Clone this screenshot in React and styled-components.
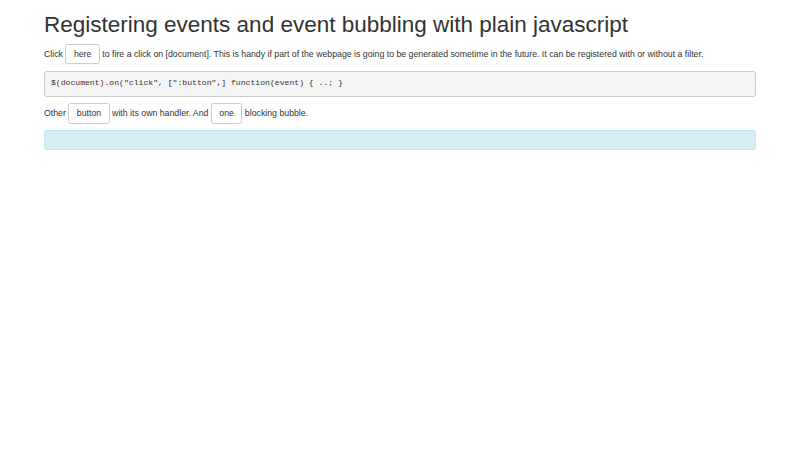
import React from "react";
import styled, { createGlobalStyle } from "styled-components";

const Global = createGlobalStyle`
  html, body { margin: 0; padding: 0; background: #fff; }
  body {
    font-family: "Liberation Sans", Arial, sans-serif;
    font-size: 8.75px;
    line-height: 12.5px;
    color: #333;
  }
  * { box-sizing: border-box; }
`;

const Container = styled.div`
  width: 712px;
  margin: 0 auto;
`;

const Title = styled.h1`
  font-family: "Liberation Sans", Arial, sans-serif;
  font-size: 22.5px;
  font-weight: 500;
  line-height: 1.1;
  color: #333;
  margin: 12.5px 0 6.25px;
`;

const Para = styled.p`
  margin: 0 0 6.25px;
`;

const Button = styled.button`
  display: inline-block;
  vertical-align: middle;
  height: 20.75px;
  font-family: "Liberation Sans", Arial, sans-serif;
  font-size: 8.75px;
  line-height: 12.5px;
  color: #333;
  background: #fff;
  border: 1px solid #ccc;
  border-radius: 2.5px;
  padding: 3.1px 7.5px;
  margin: 0;
  cursor: pointer;
`;

const Code = styled.pre`
  display: block;
  margin: 0 0 6.25px;
  padding: 5.94px;
  font-family: "Liberation Mono", "Courier New", monospace;
  font-size: 8.125px;
  line-height: 12.5px;
  color: #333;
  background: #f5f5f5;
  border: 1px solid #ccc;
  border-radius: 2.5px;
  white-space: pre;
`;

const Alert = styled.div`
  height: 19.5px;
  padding: 8.75px;
  margin-bottom: 12.5px;
  background: #d9edf7;
  border: 1px solid #bce8f1;
  border-radius: 2.5px;
  color: #31708f;
`;

export default function App() {
  return (
    <>
      <Global />
      <Container>
        <Title>Registering events and event bubbling with plain javascript</Title>
        <Para>
          Click <Button>here</Button> to fire a click on [document]. This is handy if part of the
          webpage is going to be generated sometime in the future. It can be registered with or
          without a filter.
        </Para>
        <Code>{'$(document).on("click", [":button",] function(event) { ..; }'}</Code>
        <Para>
          Other <Button>button</Button> with its own handler. And <Button>one</Button> blocking
          bubble.
        </Para>
        <Alert />
      </Container>
    </>
  );
}
